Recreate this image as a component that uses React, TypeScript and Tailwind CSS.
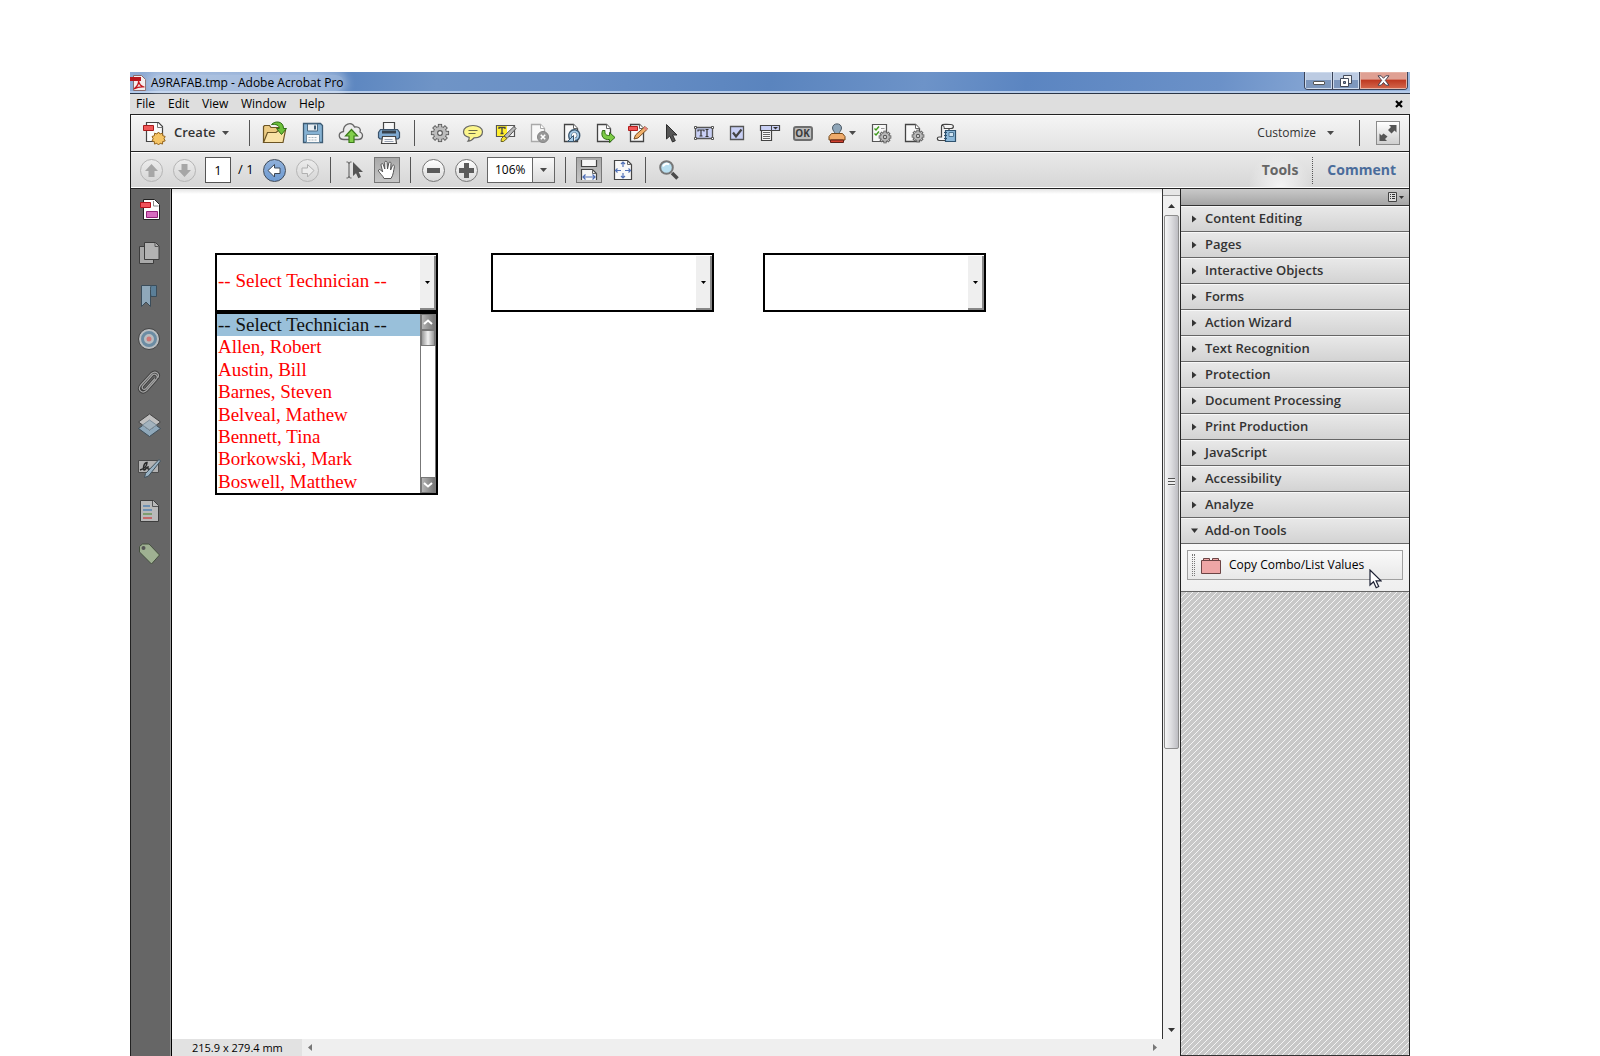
import React from 'react';
import clsx from 'clsx';

const TECHNICIANS = [
  '-- Select Technician --',
  'Allen, Robert',
  'Austin, Bill',
  'Barnes, Steven',
  'Belveal, Mathew',
  'Bennett, Tina',
  'Borkowski, Mark',
  'Boswell, Matthew',
];

const PANELS = [
  'Content Editing',
  'Pages',
  'Interactive Objects',
  'Forms',
  'Action Wizard',
  'Text Recognition',
  'Protection',
  'Document Processing',
  'Print Production',
  'JavaScript',
  'Accessibility',
  'Analyze',
  'Add-on Tools',
];

const COG_TEETH = [0, 45, 90, 135, 180, 225, 270, 315];

function Icon({ size = 24, children }: { size?: number; children: React.ReactNode }) {
  return (
    <svg width={size} height={size} viewBox={`0 0 ${size} ${size}`} fill="none" className="block shrink-0" aria-hidden="true">
      {children}
    </svg>
  );
}

function Caret({ className }: { className?: string }) {
  return (
    <svg width="7" height="4" viewBox="0 0 7 4" className={clsx('block shrink-0', className)} aria-hidden="true">
      <path d="M0 0h7L3.500 4z" fill="#4a4a4a" />
    </svg>
  );
}

// Gear, used alone and as a corner badge; r is the radius of the body
function Cog({ x, y, r = 6 }: { x: number; y: number; r?: number }) {
  const w = r * 0.5;
  return (
    <g transform={`translate(${x} ${y})`}>
      {COG_TEETH.map((a) => (
        <rect key={a} x={-w / 2} y={-r * 1.32} width={w} height={r} fill="#bdbdbd" stroke="#5c5c5c" transform={`rotate(${a})`} />
      ))}
      <circle r={r} fill="#bdbdbd" stroke="#5c5c5c" strokeWidth="0.8" />
      {COG_TEETH.map((a) => (
        <rect key={a} x={-w / 2 + 0.5} y={-r * 1.25} width={w - 1 > 0.6 ? w - 1 : 0.6} height={r * 0.6} fill="#bdbdbd" transform={`rotate(${a})`} />
      ))}
      <circle r={r * 0.36} fill="#f4f4f4" stroke="#5c5c5c" strokeWidth="1.2" />
    </g>
  );
}

function PageShape({ dim }: { dim?: boolean }) {
  return (
    <>
      <path d="M4.500 3.500h9l4 4v13h-13z" fill="#f8f8f8" stroke={dim ? '#a9a9a9' : '#444'} strokeWidth="1.3" />
      <path d="M13.500 3.500v4h4" fill="#fff" stroke={dim ? '#a9a9a9' : '#666'} />
    </>
  );
}

const FILE_TOOLS = [
  {
    label: 'Open',
    icon: (
      <Icon size={26}>
        <path d="M1.500 22.500v-16l1-1h5l1.500 2H19v4" fill="#eccb83" stroke="#6b5424" strokeWidth="1.2" />
        <path d="M1.500 22.500 5.500 12.500H14l3-2.500h6.500l-2.500 12.500z" fill="#f9e2a6" stroke="#6b5424" strokeWidth="1.2" />
        <path d="M9.500 4.500C13 .5 21.500.8 21.500 8.500H24.500l-5 6-5-6h2.800c0-3.500-3.500-4.500-7.800-4z" fill="#6cc03a" stroke="#2f6e14" />
      </Icon>
    ),
  },
  {
    label: 'Save',
    icon: (
      <Icon size={22}>
        <path d="M1.500 1.500h17l2 2v17h-19z" fill="#86b2d3" stroke="#3c5a72" strokeWidth="1.3" />
        <path d="M5.500 2h10v7h-10z" fill="#e9eef2" stroke="#4d6b83" />
        <path d="M12 3.500h2v4h-2z" fill="#3c5a72" />
        <path d="M4.500 12.500h13v8h-13z" fill="#fafafa" stroke="#6c8aa0" />
        <path d="M6.500 15.500h9M6.500 18h9" stroke="#a9b6bf" strokeDasharray="2 1" />
      </Icon>
    ),
  },
  {
    label: 'Upload',
    icon: (
      <Icon size={26}>
        <path d="M6 19.500C0 19.500-.5 12.500 5.500 11.500 5 4 13.500 1 16.500 7c5-1 6.500 2.500 5.500 5 4 2 3 7.500-2 7.500z" fill="#ececec" stroke="#666" strokeWidth="1.3" />
        <path d="M13.500 9.500l6 6.500h-3.500v6.500h-5v-6.500H7.500z" fill="#82cf4b" stroke="#3b7a1a" strokeWidth="1.2" />
      </Icon>
    ),
  },
  {
    label: 'Print',
    icon: (
      <Icon size={24}>
        <path d="M6.500 11V1.500h11V11" fill="#f7f7f7" stroke="#444" strokeWidth="1.2" />
        <path d="M3.500 8.500h17l2 3v5l-1.500 1.500H3l-1.500-1.500v-5z" fill="#7fa9d0" stroke="#3a526b" strokeWidth="1.2" />
        <path d="M5 9.500h14v3H5z" fill="#37424d" />
        <path d="M5.500 15.500h13l1 7h-15z" fill="#fafafa" stroke="#444" strokeWidth="1.2" />
        <path d="M7.500 18.500h8M7.500 20.500h9" stroke="#9aa3b3" />
      </Icon>
    ),
  },
];

const EDIT_TOOLS = [
  { label: 'Settings', icon: <Icon><Cog x={12} y={12} r={6.500} /></Icon> },
  {
    label: 'Sticky note',
    icon: (
      <Icon>
        <path d="M12 4.500c5.500 0 9.500 2.500 9.500 6.200s-3.500 6-8.500 6.200c-1.500 2-3.500 3.200-6 3.300 1-1.200 1.300-2.500 1.200-3.800C4.500 15.500 2.500 13.300 2.500 10.700 2.500 7 6.500 4.500 12 4.500z" fill="#fcf68c" stroke="#666" strokeWidth="1.2" />
        <path d="M7.500 9.500h9M7.500 12.500h7" stroke="#6b6b4a" />
      </Icon>
    ),
  },
  {
    label: 'Highlight text',
    icon: (
      <Icon>
        <path d="M2.500 4.500h18v11h-18z" fill="#f6f6f6" stroke="#555" strokeWidth="1.2" />
        <path d="M3 5h10v10H3z" fill="#ffee2e" />
        <path d="M5 8V6.500h6V8M8 6.500v6M6.500 12.500h3" stroke="#444" strokeWidth="1.300" />
        <path d="M20 5.500l2 2-9 10-3-2.500z" fill="#b9b9b9" stroke="#555" />
        <path d="M10 15l3 2.500-3.500 3H7l.5-3z" fill="#f1dd35" stroke="#6a6420" />
      </Icon>
    ),
  },
  {
    label: 'Delete page',
    icon: (
      <Icon>
        <PageShape dim />
        <circle cx="16" cy="16" r="5.500" fill="#989898" stroke="#858585" />
        <path d="M13.800 13.800l4.400 4.400M18.200 13.800l-4.400 4.400" stroke="#fff" strokeWidth="1.600" />
      </Icon>
    ),
  },
  {
    label: 'Rotate page',
    icon: (
      <Icon>
        <PageShape />
        <path d="M10.500 17.500c-2-5 1.500-8.500 5-7.500 4.500 1.500 4 8-.5 8.500" stroke="#39556e" strokeWidth="3.600" />
        <path d="M10.800 17c-1.800-4.500 1.500-7.200 4.700-6.500 3.800 1.200 3.500 7-.5 7.700" stroke="#a5cbe8" strokeWidth="1.800" />
        <path d="M7.500 20.500h6v-6z" fill="#a5cbe8" stroke="#39556e" />
      </Icon>
    ),
  },
  {
    label: 'Extract page',
    icon: (
      <Icon>
        <PageShape />
        <path d="M9.500 9.500c-2 6 1 9.500 7 9v3l5.500-5-5.500-5v3c-3.500.2-5-1.500-4.500-5z" fill="#7ccb45" stroke="#2f6e14" />
      </Icon>
    ),
  },
  {
    label: 'Edit PDF',
    icon: (
      <Icon>
        <PageShape />
        <path d="M2.500 5.500h9v4h-9z" fill="#ef5757" stroke="#b31c1c" />
        <path d="M8 18l1.500-4 9.500-8.500 2.500 2.500-9.500 9z" fill="#f0b06a" stroke="#7a4d20" />
        <path d="M17.500 7l2.500 2.500 1.500-1.500L19 5.500z" fill="#e98080" />
      </Icon>
    ),
  },
  {
    label: 'Select object',
    icon: (
      <Icon>
        <path d="M7.500 3.500v14.500l3.300-3 2.700 6 2.800-1.300-2.700-5.700h4.400z" fill="#555" stroke="#2e2e2e" />
      </Icon>
    ),
  },
  {
    label: 'Text field',
    icon: (
      <Icon>
        <path d="M3.500 6.500h17v11h-17z" fill="#c9d0f5" stroke="#555" strokeWidth="1.300" />
        <path d="M6 10.500V9h6v1.500M9 9v6M7.500 15h3M13.500 8.500h3M13.500 15.500h3M15 8.500v7" stroke="#333" strokeWidth="1.200" />
        <path d="M2.500 5.500h2v2h-2zM19.500 5.500h2v2h-2zM2.500 16.500h2v2h-2zM19.500 16.500h2v2h-2z" fill="#fff" stroke="#555" />
      </Icon>
    ),
  },
  {
    label: 'Check box',
    icon: (
      <Icon>
        <path d="M5.500 5.500h13v13h-13z" fill="#c9d0f5" stroke="#555" strokeWidth="1.300" />
        <path d="M8 11.500l3 4 5.500-7" stroke="#444" strokeWidth="2.200" />
      </Icon>
    ),
  },
  {
    label: 'Combo box',
    icon: (
      <Icon>
        <path d="M3.500 9.500h10v10h-10z" fill="#fafafa" stroke="#444" strokeWidth="1.200" />
        <path d="M2.500 4.500h19v5h-19z" fill="#c9d0f5" stroke="#444" strokeWidth="1.200" />
        <path d="M13.500 4.500v5" stroke="#444" />
        <path d="M15 6h5l-2.500 2.500z" fill="#333" />
        <path d="M5 11.500h7M5 13.500h7M5 15.500h7M5 17.500h7" stroke="#666" />
      </Icon>
    ),
  },
];

const FORM_TOOLS = [
  {
    label: 'Prepare form',
    icon: (
      <Icon>
        <path d="M3.500 3.500h14v17h-14z" fill="#f8f8f8" stroke="#555" strokeWidth="1.200" />
        <path d="M5.500 7.500l1.500 1.500 3-3.500M5.500 12.500l1.500 1.500 3-3.500" stroke="#3f9a1c" strokeWidth="1.400" />
        <path d="M12 7.500h3.500" stroke="#999" />
        <Cog x={16} y={16} r={4.400} />
      </Icon>
    ),
  },
  {
    label: 'Page settings',
    icon: (
      <Icon>
        <path d="M3.500 3.500h10l4 4v13h-14z" fill="#f8f8f8" stroke="#444" strokeWidth="1.300" />
        <path d="M13.500 3.500v4h4" fill="#fff" stroke="#666" />
        <Cog x={16} y={15} r={4.400} />
      </Icon>
    ),
  },
  {
    label: 'Batch script',
    icon: (
      <Icon>
        <path d="M6.500 6c0-3.500 2-2.500 9-2.500 4 0 3.500 4 .5 4h-2v12H4c-2.500-.5-2-3.500 0-3.500h2.500z" fill="#f4f4f4" stroke="#444" strokeWidth="1.200" />
        <path d="M6.500 4.500c2.500-.5 3 1.500 2.500 3h7" stroke="#444" />
        <path d="M10.500 9.500h10v11h-10z" fill="#8db9da" stroke="#2f526e" strokeWidth="1.200" />
        <path d="M14 11.500h4.500v4H14z" fill="#cfe3f2" stroke="#4e7592" />
        <path d="M9 11.500h3M9 14.500h3M9 17.500h3" stroke="#2f526e" />
      </Icon>
    ),
  },
];

const NAV_PANES = [
  {
    label: 'Page thumbnails',
    icon: (
      <Icon>
        <path d="M6.500 1.500h11l5 5v15h-16z" fill="#fff" stroke="#222" />
        <path d="M16.500 3v5h5" stroke="#888" />
        <path d="M3.500 4.500h10v5h-10z" fill="#f0525a" stroke="#b3131b" />
        <path d="M9.500 13.500h11v6h-11z" fill="#d86cc0" stroke="#94237a" />
      </Icon>
    ),
  },
  {
    label: 'Pages',
    icon: (
      <Icon>
        <path d="M2.500 5.500h14v17h-14z" fill="#a9a9a9" stroke="#3d3d3d" />
        <path d="M7.500 1.500h11l3.500 3.500v13.500h-14.500z" fill="#b2b2b2" stroke="#3d3d3d" />
        <path d="M18 2v3.500h3.500" stroke="#555" />
      </Icon>
    ),
  },
  {
    label: 'Bookmarks',
    icon: (
      <Icon>
        <path d="M12 1.500h7.500v11H14z" fill="#5b7f98" stroke="#3b4d5a" />
        <path d="M4.500 1.500h10c-1 1-1 2-1 4v17L9 18l-4.500 4.500z" fill="#8fa8ba" stroke="#3b4d5a" />
      </Icon>
    ),
  },
  {
    label: 'Destinations',
    icon: (
      <Icon>
        <circle cx="12" cy="12" r="10.500" fill="#b9bdc0" stroke="#444" />
        <circle cx="12" cy="12" r="6.500" stroke="#6b8ca3" strokeWidth="3" />
        <circle cx="12" cy="12" r="2.500" fill="#cf7878" />
      </Icon>
    ),
  },
  {
    label: 'Attachments',
    icon: (
      <Icon>
        <path d="M18 8.500l-9 10c-2.500 2.500-5-.5-3-2.800L15 5.500c3-3 7 .5 4.200 4L9.500 20.500c-4.500 4-9.500-1-5.500-5.500L14.500 3.500c4-3.500 9 .5 6 4.500" stroke="#3d3d3d" strokeWidth="3" />
        <path d="M18 8.500l-9 10c-2.500 2.500-5-.5-3-2.800L15 5.500c3-3 7 .5 4.200 4L9.500 20.500c-4.500 4-9.500-1-5.500-5.500L14.500 3.500c4-3.500 9 .5 6 4.500" stroke="#a5a5a5" strokeWidth="1.200" />
      </Icon>
    ),
  },
  {
    label: 'Layers',
    icon: (
      <Icon>
        <path d="M12.500 7.500l11 8-11 8-11-8z" fill="#8fa8ba" stroke="#3f4f5a" />
        <path d="M12.500 1l11 8-11 8-11-8z" fill="#c0c0c0" stroke="#444" />
        <path d="M12.500 7l7 5-7 5-7-5z" fill="#a3b3be" stroke="#7e8f9b" />
      </Icon>
    ),
  },
  {
    label: 'Signatures',
    icon: (
      <Icon>
        <path d="M1.500 4.500h20v12h-20z" fill="#b2b2b2" stroke="#4a4a4a" />
        <path d="M3 14c4-1 7-4 7-7.500-3 0-4.500 6-3 7.500 1.500.5 2-3 4-3-.5 1.500 0 3 2 2" stroke="#2a2a2a" strokeWidth="1.500" />
        <path d="M22 3.500l1.500 1.500-12 15-4 1.500 1-4z" fill="#9ab3c4" stroke="#3f4f5a" />
      </Icon>
    ),
  },
  {
    label: 'Articles',
    icon: (
      <Icon>
        <path d="M3.500 1.500h13l5 5v16h-18z" fill="#b9b9b9" stroke="#3d3d3d" />
        <path d="M15.500 2v5.500h5.500" stroke="#555" />
        <path d="M6 7h7M6 11h9" stroke="#6d90b3" strokeWidth="2" />
        <path d="M6 15h9" stroke="#7d9d6f" strokeWidth="2" />
        <path d="M6 19h9" stroke="#c46a6a" strokeWidth="2" />
      </Icon>
    ),
  },
  {
    label: 'Tags',
    icon: (
      <Icon>
        <path d="M2.500 4.500l3-2.500h6.500l10.500 11-8 9L2.500 10z" fill="#9fb192" stroke="#45503f" />
        <circle cx="6.500" cy="6" r="2" fill="#555" />
      </Icon>
    ),
  },
];

function ToolButton({ label, className, children }: { label: string; className?: string; children: React.ReactNode }) {
  return (
    <button type="button" aria-label={label} className={clsx('flex h-7 shrink-0 items-center justify-center', className ?? 'w-[33px]')}>
      {children}
    </button>
  );
}

function Separator({ className }: { className?: string }) {
  return <div className={clsx('h-[26px] w-px shrink-0 bg-[#555]', className)} />;
}

// Round button with an arrow or sign on it
function RoundGlyph({ blue, dim, children }: { blue?: boolean; dim?: boolean; children: React.ReactNode }) {
  return (
    <span
      className={clsx(
        'flex size-[23px] items-center justify-center rounded-full border',
        blue && 'border-[#3f4a58] bg-linear-to-b from-[#8fb0da] to-[#6f9bd2]',
        dim && 'border-[#b5b5b5] bg-linear-to-b from-[#ececec] to-[#d6d6d6]',
        !blue && !dim && 'border-[#777] bg-linear-to-b from-white to-[#d9d9d9]'
      )}
    >
      {children}
    </span>
  );
}

function TitleBar() {
  return (
    <header className="flex h-[22px] shrink-0 items-start justify-between border-b border-[#2b3647] bg-[linear-gradient(100deg,#8fabd4_0%,#7d9fd0_14%,#5c86c0_17%,#6f94c6_24%,#6a90c6_35%,#5a84be_50%,#6d93c8_62%,#5b85c1_70%,#6b91c8_85%,#9db8de_100%)] shadow-[inset_0_-2px_0_#b5cbea]">
      <div className="flex h-[21px] items-center gap-1">
        <svg width="17" height="18" viewBox="0 0 17 18" className="block" aria-hidden="true">
          <path d="M3.500 1.500h8l4 4v11h-12z" fill="#f5eeee" stroke="#8a6a6a" />
          <path d="M0 3h11v4H0z" fill="#b8161c" />
          <path d="M4 15c4-3 5-6 4.500-9 0 4 3 7 6 7-4-.5-7 0-10.500 2z" stroke="#c4161c" strokeWidth="1.200" fill="none" />
        </svg>
        <h1 className="rounded-full bg-white/30 text-xs leading-4 text-black shadow-[0_0_8px_4px_rgba(255,255,255,0.3)]">A9RAFAB.tmp - Adobe Acrobat Pro</h1>
      </div>
      <div className="mr-[2px] flex h-[18px] overflow-hidden rounded-b border border-t-0 border-[#3a4358]">
        <button type="button" aria-label="Minimize" className="flex w-7 items-center justify-center border-r border-[#3a4358] bg-linear-to-b from-[#bccbe2] from-45% to-[#7d97bd] to-50% shadow-[inset_0_0_0_1px_#cddaec]">
          <span className="mt-1 h-[4px] w-3 rounded-[1px] border border-[#555] bg-white" />
        </button>
        <button type="button" aria-label="Restore" className="flex w-[27px] items-center justify-center border-r border-[#3a4358] bg-linear-to-b from-[#bccbe2] from-45% to-[#7d97bd] to-50% shadow-[inset_0_0_0_1px_#cddaec]">
          <svg width="12" height="12" viewBox="0 0 12 12" fill="none">
            <path d="M3.500.5h8v8h-8z" fill="#f4f4f4" stroke="#444b5a" />
            <path d="M.5 3.500h8v8h-8z" fill="#fff" stroke="#444b5a" />
            <path d="M3.500 6.500h2v2h-2z" fill="#7d97bd" stroke="#444b5a" />
          </svg>
        </button>
        <button type="button" aria-label="Close" className="flex w-[47px] items-center justify-center bg-linear-to-b from-[#dfa093] from-40% via-[#bf3a22] via-50% to-[#d4674c] shadow-[inset_0_0_0_1px_#e6b3a6]">
          <svg width="13" height="11" viewBox="0 0 13 11" fill="none">
            <path d="M1 .8h3.200L6.500 3.300 8.800.8H12L8.300 5.400 12 10.200H8.800L6.500 7.500 4.200 10.200H1l3.700-4.800z" fill="#fff" stroke="#4c4350" />
          </svg>
        </button>
      </div>
    </header>
  );
}

function MenuBar() {
  return (
    <nav className="flex h-5 shrink-0 items-center bg-[#dedede] pr-[7px] pl-[6px] text-xs text-black">
      <button type="button" className="w-8 text-left">File</button>
      <button type="button" className="w-[34px] text-left">Edit</button>
      <button type="button" className="w-[39px] text-left">View</button>
      <button type="button" className="w-[58px] text-left">Window</button>
      <button type="button" className="w-8 text-left">Help</button>
      <button type="button" aria-label="Close document" className="ml-auto">
        <svg width="8" height="8" viewBox="0 0 8 8" fill="none">
          <path d="M1 1l6 6M7 1L1 7" stroke="#000" strokeWidth="2.200" />
        </svg>
      </button>
    </nav>
  );
}

function MainToolbar() {
  return (
    <div className="flex h-[37px] shrink-0 items-center border-t border-[#222] bg-linear-to-b from-[#f5f5f5] to-[#e2e2e2] pl-[11px] shadow-[inset_0_1px_0_#fff]">
      <button type="button" className="flex h-7 w-[88px] items-center text-[13px] font-semibold text-[#333]">
        <Icon size={26}>
          <path d="M4.500 2.500h12l4 4v15h-16z" fill="#fafafa" stroke="#444" strokeWidth="1.200" />
          <path d="M15.500 3v4.500h5" stroke="#777" />
          <path d="M1.500 5.500h10v5h-10z" fill="#ef5757" stroke="#a61b1b" />
          <path d="M16.500 12l1.500 2 2.500-.8.3 2.500 2.400.8-1.200 2.200 1.200 2.200-2.500.7-.2 2.500-2.400-.9-1.600 1.800-1.600-1.800-2.400.9-.2-2.500-2.300-.7 1.200-2.200-1.200-2.200 2.400-.8.200-2.500 2.400.8z" fill="#f6c565" stroke="#94641c" />
        </Icon>
        <span className="ml-[6px]">Create</span>
        <Caret className="ml-[6px]" />
      </button>
      <Separator className="mr-[6px] ml-[19px]" />
      {FILE_TOOLS.map((t) => (
        <ToolButton key={t.label} label={t.label} className="w-[38px]">
          {t.icon}
        </ToolButton>
      ))}
      <Separator className="mr-2 ml-[6px]" />
      {EDIT_TOOLS.map((t) => (
        <ToolButton key={t.label} label={t.label}>
          {t.icon}
        </ToolButton>
      ))}
      <ToolButton label="Add button">
        <span className="flex h-[15px] w-5 items-center justify-center rounded-[3px] border-2 border-[#6e6e6e] bg-[#bcbcbc] text-[10px] font-bold text-[#3c3c3c]">OK</span>
      </ToolButton>
      <ToolButton label="Stamp" className="w-[43px]">
        <Icon>
          <path d="M9.500 13c1-2-2-3-2-6 0-5.500 9-5.500 9 0 0 3-3 4-2 6z" fill="#8ea5b8" stroke="#4c5a66" />
          <path d="M6.500 12.500h11l2.500 3v3.500H4v-3.500z" fill="#efab6b" stroke="#754717" />
          <path d="M5.500 19h13v2.500h-13z" fill="#d0402e" stroke="#5e2118" />
        </Icon>
        <Caret />
      </ToolButton>
      <div className="w-[2px]" />
      {FORM_TOOLS.map((t) => (
        <ToolButton key={t.label} label={t.label}>
          {t.icon}
        </ToolButton>
      ))}
      <div className="ml-auto flex items-center pr-[9px]">
        <button type="button" className="flex items-center text-xs text-[#333]">
          Customize
          <Caret className="ml-[11px]" />
        </button>
        <Separator className="mr-4 ml-[25px]" />
        <button type="button" aria-label="Read mode" className="flex size-6 items-center justify-center border border-[#8b8b8b] bg-linear-to-b from-white to-[#cfcfcf]">
          <svg width="20" height="20" viewBox="0 0 20 20" fill="#555">
            <path d="M11 2h7.500v7.500l-2-2-3 3-3.500-3.500 3-3zM9 18H1.500v-7.500l2 2 2-2L9.500 13.500 7 16z" />
          </svg>
        </button>
      </div>
    </div>
  );
}

function PageToolbar() {
  return (
    <div className="flex h-[38px] shrink-0 items-center border-y border-[#222] bg-linear-to-b from-[#e9e9e9] to-[#d6d6d6] pl-[4px] shadow-[inset_0_1px_0_#fff,inset_0_-1px_0_#fff]">
      <ToolButton label="Previous page">
        <RoundGlyph dim>
          <svg width="13" height="13" viewBox="0 0 13 13" fill="#a6a6a6"><path d="M6.500 0L13 7H9.500v6h-6V7H0z" /></svg>
        </RoundGlyph>
      </ToolButton>
      <ToolButton label="Next page">
        <RoundGlyph dim>
          <svg width="13" height="13" viewBox="0 0 13 13" fill="#a6a6a6"><path d="M6.500 13L13 6H9.500V0h-6v6H0z" /></svg>
        </RoundGlyph>
      </ToolButton>
      <input aria-label="Page number" defaultValue="1" className="ml-1 h-[26px] w-[26px] shrink-0 border border-[#555] bg-white text-center text-[13px] text-black" />
      <span className="ml-[7px] w-5 text-[13px] whitespace-nowrap text-black">/ 1</span>
      <ToolButton label="Previous view">
        <RoundGlyph blue>
          <svg width="15" height="15" viewBox="0 0 15 15" fill="#fff" stroke="#3d4856"><path d="M1 7.500L7.500 1.500V5H13v5.500H7.500v3.500z" /></svg>
        </RoundGlyph>
      </ToolButton>
      <ToolButton label="Next view">
        <RoundGlyph dim>
          <svg width="15" height="15" viewBox="0 0 15 15" fill="#ececec" stroke="#b0b0b0"><path d="M14 7.500L7.500 1.500V5H2v5.500h5.500v3.500z" /></svg>
        </RoundGlyph>
      </ToolButton>
      <Separator className="mr-[7px] ml-[6px]" />
      <ToolButton label="Select tool">
        <Icon>
          <path d="M3.500 4c2 0 2.500.5 2.500 1.500 0-1 .5-1.500 2.500-1.500M3.500 20c2 0 2.500-.5 2.500-1.500 0 1 .5 1.500 2.500 1.500M6 5v14" stroke="#555" />
          <path d="M10 4v14l3-2.800 2.300 5 2.700-1.200-2.300-5h4.300z" fill="#555" />
        </Icon>
      </ToolButton>
      <button type="button" aria-label="Hand tool" className="ml-[3px] flex size-[26px] shrink-0 items-center justify-center border border-[#777] bg-linear-to-b from-[#a9a9a9] to-[#c6c6c6]">
        <Icon size={22}>
          <path d="M8 19.500c-1-2.500-4-5-5.500-7.500-.5-1.500 1.200-2 2.200-1l2 2L5 6c-.2-1.600 1.800-2 2.300-.5L8.800 10 8.700 3.500c0-1.700 2.200-1.700 2.400 0L11.500 10l1.300-6c.3-1.500 2.300-1.200 2.200.4L14.600 11l1.800-4.200c.6-1.400 2.400-.7 2 .8-.9 3.900-.9 8.400-3.400 11.900z" fill="#fff" stroke="#555" />
        </Icon>
      </button>
      <Separator className="mr-[6px] ml-[10px]" />
      <ToolButton label="Zoom out">
        <RoundGlyph><span className="h-[5px] w-[13px] bg-[#5b5b5b]" /></RoundGlyph>
      </ToolButton>
      <ToolButton label="Zoom in">
        <RoundGlyph>
          <svg width="15" height="15" viewBox="0 0 15 15" fill="#5b5b5b"><path d="M5 0h5v5h5v5h-5v5H5v-5H0V5h5z" /></svg>
        </RoundGlyph>
      </ToolButton>
      <div className="ml-1 flex h-[26px] w-[68px] shrink-0 border border-[#666] bg-white">
        <input aria-label="Zoom level" defaultValue="106%" className="w-11 pl-[7px] text-xs text-black" />
        <button type="button" aria-label="Zoom presets" className="flex flex-1 items-center justify-center border-l border-[#666] bg-linear-to-b from-[#fafafa] to-[#dcdcdc]">
          <Caret />
        </button>
      </div>
      <Separator className="mr-[10px] ml-[10px]" />
      <button type="button" aria-label="Fit width" className="flex size-[26px] shrink-0 items-center justify-center border border-[#777] bg-linear-to-b from-[#a9a9a9] to-[#c6c6c6]">
        <Icon size={22}>
          <path d="M3.500 1v6.500h15V1" fill="#f6f6f6" stroke="#444" strokeWidth="1.200" />
          <path d="M3.500 21V10.500h11l4 4V21" fill="#f6f6f6" stroke="#444" strokeWidth="1.200" />
          <path d="M14.500 10.500v4h4" stroke="#666" />
          <path d="M5 18h12M7.500 15.500L5 18 7.500 20.500M14.500 15.500L17 18l-2.500 2.500" stroke="#4a6bb5" strokeWidth="1.200" />
        </Icon>
      </button>
      <ToolButton label="Fit page" className="ml-1 w-[33px]">
        <Icon>
          <path d="M3.500 2.500h13l4 4v15h-17z" fill="#f8f8f8" stroke="#444" strokeWidth="1.200" />
          <path d="M16.500 2.500v4h4" stroke="#666" />
          <path d="M12 4v5M12 15v5M4.500 12.500H10M14 12.500h5.500M10 6l2-2 2 2M10 18l2 2 2-2M6.500 10.500l-2 2 2 2M17.500 10.500l2 2-2 2" stroke="#5272b8" strokeWidth="1.200" />
        </Icon>
      </ToolButton>
      <Separator className="mr-[6px] ml-[6px]" />
      <ToolButton label="Find">
        <Icon>
          <path d="M15 15l5.500 5.500" stroke="#4b4b4b" strokeWidth="3.600" />
          <circle cx="9.500" cy="9.500" r="6.300" fill="#b9dff0" stroke="#777" strokeWidth="2" />
          <path d="M6 8.500c1-2.500 4-3.500 6-2" stroke="#fff" strokeWidth="2" />
        </Icon>
      </ToolButton>
      <div className="ml-auto flex h-full items-center pr-[13px] text-[14px] font-bold">
        <button type="button" className="h-full bg-[radial-gradient(ellipse_at_bottom,#f5f5f5_0%,transparent_70%)] px-[14px] pb-px text-[#666]">Tools</button>
        <div className="mr-[14px] h-[27px] border-l border-dotted border-[#555]" />
        <button type="button" className="pb-px text-[#4a6c9b]">Comment</button>
      </div>
    </div>
  );
}

function NavigationPane() {
  return (
    <nav className="flex w-[41px] shrink-0 flex-col border-r border-black bg-[#666] shadow-[inset_-1px_0_0_#999]">
      {NAV_PANES.map((p) => (
        <button key={p.label} type="button" aria-label={p.label} className="flex h-[43px] items-center justify-center pr-1 pb-[2px]">
          {p.icon}
        </button>
      ))}
    </nav>
  );
}

function ComboField({ label, options, className, children }: { label: string; options: string[]; className?: string; children?: React.ReactNode }) {
  return (
    <div className={clsx('relative flex h-[59px] w-[223px] shrink-0 border-2 border-black bg-white', className)}>
      <select aria-label={label} className="min-w-0 flex-1 appearance-none pb-[2px] pl-px font-['Liberation_Serif',serif] text-[19px] text-[#ff0000]">
        {options.map((o) => (
          <option key={o}>{o}</option>
        ))}
      </select>
      <span className="mt-px flex w-4 shrink-0 items-center justify-center border-r-2 border-b-2 border-[#888] bg-[#efefef]">
        <svg width="5" height="3" viewBox="0 0 5 3"><path d="M0 0h5L2.500 3z" /></svg>
      </span>
      {children}
    </div>
  );
}

function TechnicianList() {
  return (
    <div className="absolute top-full -right-[2px] -left-[2px] mt-[2px] flex h-[183px] border-2 border-black bg-white">
      <ul role="listbox" aria-label="Technicians" className="flex flex-1 flex-col font-['Liberation_Serif',serif] text-[19px] leading-[22px] text-[#ff0000]">
        {TECHNICIANS.map((name, i) => (
          <li key={name} role="option" aria-selected={i === 0} className={clsx('flex-1 pl-px', i === 0 && 'bg-[#99c0da] text-[#111]')}>
            {name}
          </li>
        ))}
      </ul>
      <div className="flex w-4 flex-col border-x border-[#777]">
        <button type="button" aria-label="Scroll up" className="flex h-4 items-center justify-center border border-[#777] bg-linear-to-r from-[#b5b5b5] to-[#777]">
          <svg width="10" height="6" viewBox="0 0 10 6" fill="none"><path d="M1 5l4-3.500L9 5" stroke="#fff" strokeWidth="2" /></svg>
        </button>
        <div className="h-4 border border-[#777] bg-linear-to-r from-[#999] via-[#f2f2f2] to-[#999]" />
        <div className="flex-1" />
        <button type="button" aria-label="Scroll down" className="flex h-4 items-center justify-center border border-[#777] bg-linear-to-r from-[#b5b5b5] to-[#777]">
          <svg width="10" height="6" viewBox="0 0 10 6" fill="none"><path d="M1 1l4 3.500L9 1" stroke="#fff" strokeWidth="2" /></svg>
        </button>
      </div>
    </div>
  );
}

function DocumentArea() {
  return (
    <main className="flex min-w-0 flex-1 flex-col">
      <div className="flex min-h-0 flex-1">
        <div className="min-w-0 flex-1 bg-linear-to-b from-[#e4e4e4] to-white to-[5px] pt-16 pl-[43px]">
          <form className="flex">
            <ComboField label="Technician" options={[TECHNICIANS[0]]}>
              <TechnicianList />
            </ComboField>
            <ComboField label="Second field" options={['']} className="ml-[53px]" />
            <ComboField label="Third field" options={['']} className="ml-[49px]" />
          </form>
        </div>
        <div className="flex w-[18px] shrink-0 flex-col border-l border-[#333] bg-[#f0f0f0]">
          <div className="h-[7px] border-b border-[#999] bg-[#e6e6e6]" />
          <button type="button" aria-label="Scroll up" className="flex h-[19px] items-center justify-center">
            <svg width="7" height="4" viewBox="0 0 7 4"><path d="M0 4h7L3.500 0z" fill="#333" /></svg>
          </button>
          <div className="ml-px flex h-[534px] w-[15px] flex-col items-center justify-center rounded-xs border border-[#8d8d8d] bg-linear-to-r from-[#f6f6f6] via-[#dcdcdf] to-[#bdbdc2]">
            <span className="h-2 w-[7px] bg-[repeating-linear-gradient(#555_0_1px,#eee_1px_3px)]" />
          </div>
          <button type="button" aria-label="Scroll down" className="mt-auto flex h-[18px] items-center justify-center">
            <svg width="7" height="4" viewBox="0 0 7 4"><path d="M0 0h7L3.500 4z" fill="#333" /></svg>
          </button>
        </div>
      </div>
      <footer className="flex h-[17px] shrink-0 items-center bg-[#efefef] pr-[23px] text-[11px] text-black">
        <span className="h-full w-[130px] bg-[#e2e2e2] pl-5 leading-[17px]">215.9 x 279.4 mm</span>
        <button type="button" aria-label="Scroll left" className="ml-[6px]">
          <svg width="4" height="7" viewBox="0 0 4 7"><path d="M4 0v7L0 3.500z" fill="#777" /></svg>
        </button>
        <button type="button" aria-label="Scroll right" className="ml-auto">
          <svg width="4" height="7" viewBox="0 0 4 7"><path d="M0 0v7l4-3.500z" fill="#777" /></svg>
        </button>
      </footer>
    </main>
  );
}

function ToolsPane() {
  return (
    <aside className="flex w-[230px] shrink-0 flex-col border-x border-[#222]">
      <div className="flex h-[17px] shrink-0 items-center justify-end border-b border-[#333] bg-linear-to-b from-[#c9c9c9] to-[#a5a5a5] pr-[5px]">
        <button type="button" aria-label="Panel options" className="flex items-center gap-[2px]">
          <svg width="9" height="10" viewBox="0 0 9 10" fill="none">
            <path d="M.5.5h8v9h-8z" fill="#ddd" stroke="#444" />
            <path d="M2 2.500h1M4 2.500h3M2 4.500h1M4 4.500h3M2 6.500h1M4 6.500h3" stroke="#333" />
          </svg>
          <svg width="5" height="3" viewBox="0 0 5 3"><path d="M0 0h5L2.500 3z" fill="#333" /></svg>
        </button>
      </div>
      {PANELS.map((name) => {
        const open = name === 'Add-on Tools';
        return (
          <button
            key={name}
            type="button"
            aria-expanded={open}
            className="flex h-[26px] shrink-0 items-center border-b border-[#666] bg-linear-to-b from-[#e9e9e9] to-[#d3d3d3] pl-[10px] text-[13px] font-semibold text-[#333] shadow-[inset_0_1px_0_#f8f8f8]"
          >
            <svg width="7" height="8" viewBox="0 0 7 8" fill="#333" className="mr-[7px]">
              <path d={open ? 'M0 1.500h7L3.500 6z' : 'M1 0.500v7L5.500 4z'} />
            </svg>
            {name}
          </button>
        );
      })}
      <div className="h-12 shrink-0 border-b border-[#666] bg-linear-to-b from-[#f9f9f9] to-[#efefef] px-[6px] pt-[6px]">
        <button type="button" className="relative flex h-[30px] w-full items-center border border-[#a0a0a0] bg-linear-to-b from-[#fafafa] to-[#e8e8e8] pl-1 text-xs text-black">
          <span className="h-[22px] w-[3px] border-x border-dotted border-[#777]" />
          <svg width="20" height="17" viewBox="0 0 20 17" fill="#eea6a6" stroke="#6b4444" className="ml-[6px]">
            <path d="M2.500 3.500v-2h6v2M11.500 3.500v-2h6v2" />
            <path d="M.5 3.500h19v13H.5z" />
          </svg>
          <span className="ml-2">Copy Combo/List Values</span>
          <svg width="13" height="20" viewBox="0 0 13 20" className="absolute top-[18px] right-[20px] z-10" aria-hidden="true">
            <path d="M1 1v15l3.500-3.300 2.700 6 2.500-1.200-2.600-5.600H12z" fill="#fff" stroke="#1c2033" strokeWidth="1.200" />
          </svg>
        </button>
      </div>
      <div className="flex-1 border-b border-[#333] bg-[#c8c8c8] bg-[linear-gradient(135deg,transparent_45%,#f4f4f4_45%,#f4f4f4_55%,transparent_55%)] bg-[length:6px_6px]" />
    </aside>
  );
}

function App() {
  return (
    <div className="flex h-screen flex-col bg-white pt-[72px] pr-[190px] pl-[130px] font-['Open_Sans','Noto_Sans',sans-serif]">
      <TitleBar />
      <div className="flex min-h-0 flex-1 flex-col">
        <MenuBar />
        <div className="border-x border-[#222]">
          <MainToolbar />
          <PageToolbar />
        </div>
        <div className="flex min-h-0 flex-1">
          <div className="w-px shrink-0 bg-[#222]" />
          <NavigationPane />
          <DocumentArea />
          <ToolsPane />
        </div>
      </div>
    </div>
  );
}

export default App;
